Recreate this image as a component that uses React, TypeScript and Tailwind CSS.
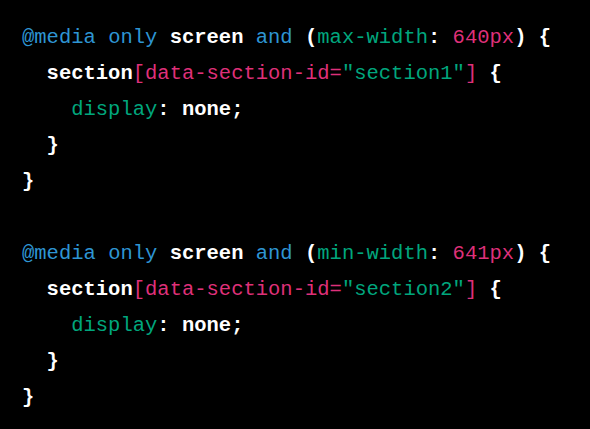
const K = ({ children }: { children: React.ReactNode }) => (
  <span className="text-[#2e95d3] font-normal">{children}</span>
);
const G = ({ children }: { children: React.ReactNode }) => (
  <span className="text-[#00a67d] font-normal">{children}</span>
);
const P = ({ children }: { children: React.ReactNode }) => (
  <span className="text-[#df3079] font-normal">{children}</span>
);

export default function App() {
  return (
    <div className="w-[590px] h-[429px] bg-black overflow-hidden">
      <pre className="px-[22px] pt-[20px] font-['Liberation_Mono',monospace] text-[20.5px] leading-[36px] text-white font-bold">
        <K>@media</K> <K>only</K> screen <K>and</K> (<G>max-width</G>: <P>640px</P>) {"{"}
        {"\n  "}section<P>[data-section-id=</P><G>"section1"</G><P>]</P> {"{"}
        {"\n    "}<G>display</G>: none;
        {"\n  }"}
        {"\n}"}
        {"\n"}
        {"\n"}<K>@media</K> <K>only</K> screen <K>and</K> (<G>min-width</G>: <P>641px</P>) {"{"}
        {"\n  "}section<P>[data-section-id=</P><G>"section2"</G><P>]</P> {"{"}
        {"\n    "}<G>display</G>: none;
        {"\n  }"}
        {"\n}"}
      </pre>
    </div>
  );
}
